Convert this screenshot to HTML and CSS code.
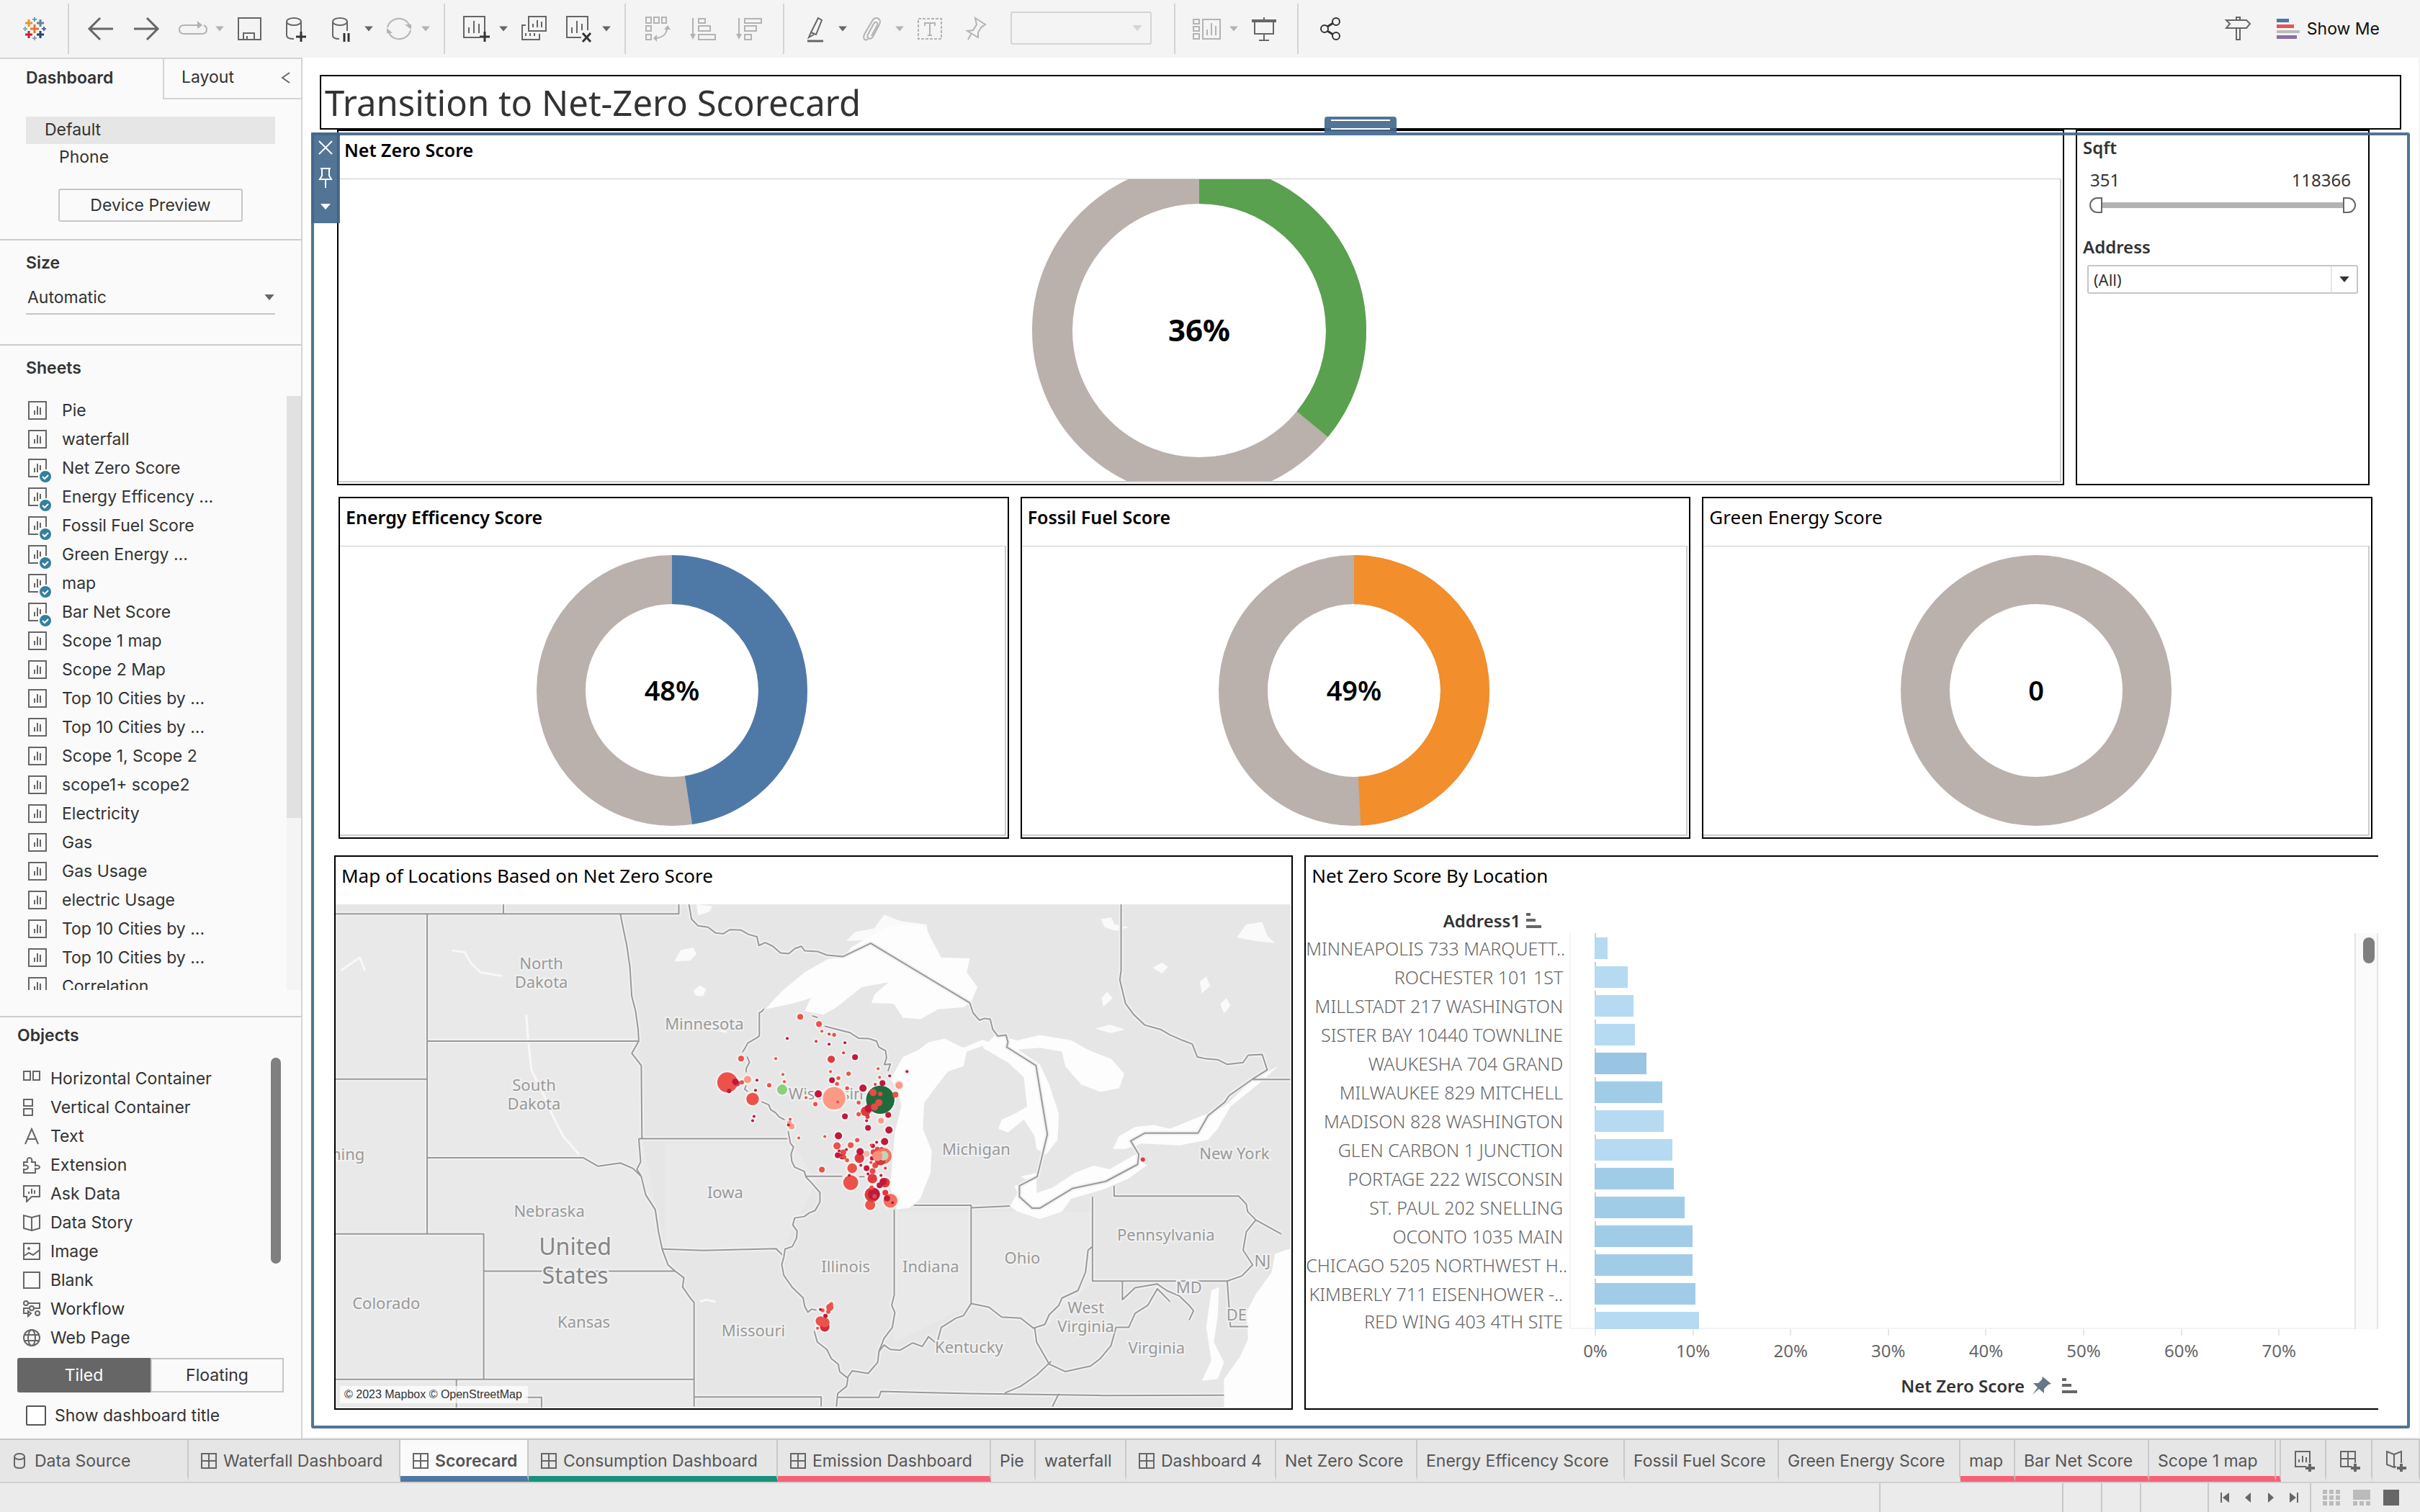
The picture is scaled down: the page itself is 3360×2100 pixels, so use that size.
FILE: index.html
```html
<!DOCTYPE html>
<html lang="en">
<head>
	<meta charset="UTF-8">
	<title>Transition to Net-Zero Scorecard</title>
	<link rel="stylesheet" href="styles.css">
</head>
<body>
	<!-- shared icons -->
	<svg class="defs" width="0" height="0">
		<symbol id="i-sheet" viewBox="0 0 26 26"><path d="M1 1h24v24H1zM9 19v-6M13 19V7M17 19V9" fill="none" stroke="#666" stroke-width="2"/></symbol>
		<symbol id="i-sheet-used" viewBox="0 0 34 34"><path d="M14 25H1V1h24v14M9 19v-6M13 19V7M17 16V9" fill="none" stroke="#666" stroke-width="2"/><circle cx="24" cy="25" r="8" fill="#357f9f"/><path d="M20 25l3 3 5-5" fill="none" stroke="#fff" stroke-width="2"/></symbol>
		<symbol id="i-grid" viewBox="0 0 24 24"><path d="M2 2h20v20H2zM12 2v20M2 12h20" fill="none" stroke="#666" stroke-width="2"/></symbol>
		<symbol id="i-caret" viewBox="0 0 12 12"><path d="M1 3h10L6 9z" fill="currentColor"/></symbol>
		<symbol id="i-sort" viewBox="0 0 22 22"><path d="M0 0h6v4H0zM0 8h13v4H0zM0 17h21v4H0z" fill="#666"/></symbol>
	</svg>

	<header class="toolbar">
		<button class="tool logo" aria-label="Tableau"><svg viewBox="0 0 40 40">
			<g fill="none" stroke-width="3"><path d="M20 14v12M14 20h12" stroke="#e8762c"/><path d="M12 7v10M7 12h10" stroke="#eb912c"/><path d="M28 7v10M23 12h10" stroke="#59879b"/><path d="M12 23v10M7 28h10" stroke="#c72035"/><path d="M28 23v10M23 28h10" stroke="#1f447e"/></g>
			<g fill="none" stroke-width="2"><path d="M20 4v6M17 7h6" stroke="#7099a6"/><path d="M20 30v6M17 33h6" stroke="#8aa0bd"/><path d="M7 17v6M4 20h6" stroke="#7ab0bd"/><path d="M33 17v6M30 20h6" stroke="#5b6591"/></g>
		</svg></button>
		<span class="sep"></span>
		<button class="tool" aria-label="Undo"><svg viewBox="0 0 40 40"><path d="M19 5L4 20l15 15M4 20h33" stroke-width="3"/></svg></button>
		<button class="tool" aria-label="Redo"><svg viewBox="0 0 40 40"><path d="M20 5l15 15-15 15M35 20H2" stroke-width="3"/></svg></button>
		<button class="tool off" aria-label="Replay"><svg viewBox="0 0 40 40"><path d="M27 15H8q-7 0-7 6t7 6h24q7 0 7-6 0-4-4-6"/><path d="M26 9l7 6-7 5z" class="solid"/></svg></button>
		<button class="caret off" aria-label="Replay options"><svg><use href="#i-caret"/></svg></button>
		<button class="tool" aria-label="Save"><svg viewBox="0 0 40 40"><path d="M4 5h31v30H4zM11 35V26h15v9M16 35v-5"/></svg></button>
		<button class="tool" aria-label="New data source"><svg viewBox="0 0 40 40"><ellipse cx="17" cy="10" rx="10" ry="5"/><path d="M7 10v19q0 5 10 5M27 10v15"/><path d="M27 24v14M20 31h14" class="dark"/></svg></button>
		<button class="tool" aria-label="Pause updates"><svg viewBox="0 0 40 40"><ellipse cx="17" cy="10" rx="10" ry="5"/><path d="M7 10v19q0 5 9 5M27 10v13"/><path d="M23 26v12M29 26v12" class="dark"/></svg></button>
		<button class="caret" aria-label="Update options"><svg><use href="#i-caret"/></svg></button>
		<button class="tool off" aria-label="Refresh"><svg viewBox="0 0 40 40"><path d="M4 18A16 15 0 0 1 34 14M36 22A16 15 0 0 1 6 26"/><path d="M28 14h9v7zM3 19v7h8z" class="solid"/></svg></button>
		<button class="caret off" aria-label="Refresh options"><svg><use href="#i-caret"/></svg></button>
		<span class="sep"></span>
		<button class="tool" aria-label="New worksheet"><svg viewBox="0 0 40 40"><path d="M24 32H2V3h29v21M9 26v-8M16 26V9M23 26V13"/><path d="M31 24v14M24 31h14" class="dark"/></svg></button>
		<button class="caret" aria-label="New worksheet options"><svg><use href="#i-caret"/></svg></button>
		<button class="tool" aria-label="Duplicate"><svg viewBox="0 0 40 40"><path d="M13 3h24v20H13zM19 18v-5M25 18V8M31 18v-8M9 15H4v20h24v-8M9 30v-4M15 30v-4M21 30v-4"/></svg></button>
		<button class="tool" aria-label="Clear sheet"><svg viewBox="0 0 40 40"><path d="M22 32H2V3h29v19M9 26v-8M16 26V9M23 22V13"/><path d="M24 26l11 12M35 26L24 38" class="dark"/></svg></button>
		<button class="caret" aria-label="Clear options"><svg><use href="#i-caret"/></svg></button>
		<span class="sep"></span>
		<button class="tool off" aria-label="Swap"><svg viewBox="0 0 40 40"><path d="M4 4h7v8H4zM15 4h7v8h-7zM26 4h6v8h-6zM4 16h7v7H4zM4 28h7v7H4zM18 33q14-2 15-13"/><path d="M29 21l5-6 4 6zM19 28l-5 5 5 5z" class="solid"/></svg></button>
		<button class="tool off" aria-label="Sort ascending"><svg viewBox="0 0 40 40"><path d="M5 5v26M13 6h9v6h-9zM13 16h16v7H13zM13 28h23v7H13z"/><path d="M1 27h8l-4 8z" class="solid"/></svg></button>
		<button class="tool off" aria-label="Sort descending"><svg viewBox="0 0 40 40"><path d="M5 5v26M13 6h23v6H13zM13 16h16v7H13zM13 28h9v7h-9z"/><path d="M1 27h8l-4 8z" class="solid"/></svg></button>
		<span class="sep"></span>
		<button class="tool" aria-label="Highlight"><svg viewBox="0 0 40 40"><path d="M23 5l5 3-8 20-7-3zM13 25l-3 7 7-4"/><path d="M8 37h22" stroke-width="3"/></svg></button>
		<button class="caret" aria-label="Highlight options"><svg><use href="#i-caret"/></svg></button>
		<button class="tool off" aria-label="Group"><svg viewBox="0 0 40 40"><path d="M18 30l8-15c2-4-3-6-5-2l-8 15c-2 4 3 9 7 3l9-17c4-8-6-13-10-5L9 26c-5 9 2 12 5 7"/></svg></button>
		<button class="caret off" aria-label="Group options"><svg><use href="#i-caret"/></svg></button>
		<button class="tool off" aria-label="Show mark labels"><svg viewBox="0 0 40 40"><path d="M4 6h32v28H4z" stroke-dasharray="4 2"/><path d="M13 16v-4h14v4M20 12v17M17 29h6"/></svg></button>
		<button class="tool off" aria-label="Fix axes"><svg viewBox="0 0 40 40"><path d="M19 5l14 9-4 3-1 0-5 8 0 7-15-9 8-1 5-8zM14 26L9 35"/></svg></button>
		<div class="fit-select"><select aria-label="Fit"><option></option></select><svg><use href="#i-caret"/></svg></div>
		<span class="sep"></span>
		<button class="tool off" aria-label="Show cards"><svg viewBox="0 0 40 40"><path d="M1 7h8v6H1zM1 17h8v6H1zM1 27h8v7H1zM14 7h24v27H14zM20 29v-8M26 29V12M32 29V16"/></svg></button>
		<button class="caret off" aria-label="Card options"><svg><use href="#i-caret"/></svg></button>
		<button class="tool" aria-label="Presentation mode"><svg viewBox="0 0 40 40"><path d="M7 10v17h26V10M20 27v9M13 36h14M20 4v3"/><path d="M3 9h34" stroke-width="4"/></svg></button>
		<span class="sep"></span>
		<button class="tool" aria-label="Share"><svg viewBox="0 0 40 40"><path d="M16 17l8-5M16 23l8 5" class="dark"/><g stroke="#333"><circle cx="12" cy="20" r="5"/><circle cx="28" cy="10" r="5"/><circle cx="28" cy="30" r="5"/></g></svg></button>
		<button class="tool guide" aria-label="Guide"><svg viewBox="0 0 40 40"><path d="M4 8h28l5 5-5 6H4l5-6zM18 19v16h5V19M18 8V4h5v4"/></svg></button>
		<button class="show-me"><svg width="32" height="32" viewBox="0 0 32 32"><path d="M0 2h17v5H0z" fill="#4a78a8"/><path d="M0 10h24v5H0z" fill="#e15759"/><path d="M0 18h32v4H0z" fill="#bbb"/><path d="M0 25h28v5H0z" fill="#8a6fa8"/></svg>Show Me</button>
	</header>

	<div class="workspace">
		<aside class="sidebar">
			<nav class="side-tabs">
				<button class="side-tab active">Dashboard</button>
				<button class="side-tab">Layout</button>
				<button class="collapse" aria-label="Collapse"><svg width="14" height="16" viewBox="0 0 14 16"><path d="M12 1L2 8l10 7" fill="none" stroke="#666" stroke-width="2"/></svg></button>
			</nav>
			<section class="devices">
				<ul>
					<li class="selected">Default</li>
					<li class="nested">Phone</li>
				</ul>
				<button class="preview">Device Preview</button>
			</section>
			<section class="size">
				<h2><label for="size">Size</label></h2>
				<div class="size-select">
					<select id="size"><option>Automatic</option></select>
					<svg><use href="#i-caret"/></svg>
				</div>
			</section>
			<section class="sheets">
				<h2>Sheets</h2>
				<div class="sheet-scroll">
					<ul>
						<li><svg class="sheet"><use href="#i-sheet"/></svg>Pie</li>
						<li><svg class="sheet"><use href="#i-sheet"/></svg>waterfall</li>
						<li><svg class="used"><use href="#i-sheet-used"/></svg>Net Zero Score</li>
						<li><svg class="used"><use href="#i-sheet-used"/></svg>Energy Efficency ...</li>
						<li><svg class="used"><use href="#i-sheet-used"/></svg>Fossil Fuel Score</li>
						<li><svg class="used"><use href="#i-sheet-used"/></svg>Green Energy ...</li>
						<li><svg class="used"><use href="#i-sheet-used"/></svg>map</li>
						<li><svg class="used"><use href="#i-sheet-used"/></svg>Bar Net Score</li>
						<li><svg class="sheet"><use href="#i-sheet"/></svg>Scope 1 map</li>
						<li><svg class="sheet"><use href="#i-sheet"/></svg>Scope 2 Map</li>
						<li><svg class="sheet"><use href="#i-sheet"/></svg>Top 10 Cities by ...</li>
						<li><svg class="sheet"><use href="#i-sheet"/></svg>Top 10 Cities by ...</li>
						<li><svg class="sheet"><use href="#i-sheet"/></svg>Scope 1, Scope 2</li>
						<li><svg class="sheet"><use href="#i-sheet"/></svg>scope1+ scope2</li>
						<li><svg class="sheet"><use href="#i-sheet"/></svg>Electricity</li>
						<li><svg class="sheet"><use href="#i-sheet"/></svg>Gas</li>
						<li><svg class="sheet"><use href="#i-sheet"/></svg>Gas Usage</li>
						<li><svg class="sheet"><use href="#i-sheet"/></svg>electric Usage</li>
						<li><svg class="sheet"><use href="#i-sheet"/></svg>Top 10 Cities by ...</li>
						<li><svg class="sheet"><use href="#i-sheet"/></svg>Top 10 Cities by ...</li>
						<li><svg class="sheet"><use href="#i-sheet"/></svg>Correlation</li>
					</ul>
					<div class="track"><div class="thumb"></div></div>
				</div>
			</section>
			<section class="objects">
				<h2>Objects</h2>
				<div class="object-scroll">
					<ul>
						<li><svg viewBox="0 0 24 24"><path d="M1 2h9v12H1zM14 2h9v12h-9z"/></svg>Horizontal Container</li>
						<li><svg viewBox="0 0 24 24"><path d="M1 1h12v9H1zM1 14h12v9H1z"/></svg>Vertical Container</li>
						<li><svg viewBox="0 0 24 24"><path d="M3 23l9-21 9 21M6 16h12"/></svg>Text</li>
						<li><svg viewBox="0 0 24 24"><path d="M1 8h5c-1-3 0-6 3-6s4 3 3 6h5v5c3-1 6 0 6 2s-3 3-6 2v6H1v-5c4 1 6-1 6-3s-3-3-6-2z"/></svg>Extension</li>
						<li><svg viewBox="0 0 24 24"><path d="M1 1h22v15H12l-7 7v-7H1zM8 12V9M12 12V5M16 12V7"/></svg>Ask Data</li>
						<li><svg viewBox="0 0 24 24"><path d="M12 5L1 2v18l11 3 11-3V2zM12 5v18"/></svg>Data Story</li>
						<li><svg viewBox="0 0 24 24"><path d="M1 1h22v22H1zM2 18l6-4 6 3 9-7"/><circle cx="8" cy="8" r="1"/></svg>Image</li>
						<li><svg viewBox="0 0 24 24"><path d="M1 1h22v22H1z"/></svg>Blank</li>
						<li><svg viewBox="0 0 24 24"><circle cx="4" cy="4" r="3"/><path d="M7 4h16v7h-7M8 11H1v7h5"/><circle cx="12" cy="11" r="3"/><circle cx="20" cy="18" r="3"/><path d="M7 15l4 3-4 4z"/></svg>Workflow</li>
						<li><svg viewBox="0 0 24 24"><circle cx="12" cy="12" r="11"/><ellipse cx="12" cy="12" rx="5" ry="11"/><path d="M2 8h20M2 16h20"/></svg>Web Page</li>
					</ul>
					<div class="object-thumb"></div>
				</div>
				<div class="toggle">
					<button class="on">Tiled</button>
					<button>Floating</button>
				</div>
				<label class="show-title"><input type="checkbox">Show dashboard title</label>
			</section>
		</aside>

		<main class="dashboard">
			<h1>Transition to Net-Zero Scorecard</h1>
			<div class="row row-top">
				<section class="panel">
					<h3>Net Zero Score</h3>
					<div class="donut">
						<svg width="464" height="464" viewBox="0 0 464 464">
							<circle cx="232" cy="232" r="204" fill="none" stroke="#bab0ac" stroke-width="56"/>
							<circle cx="232" cy="232" r="204" fill="none" stroke="#59a14f" stroke-width="56" pathLength="100" stroke-dasharray="36 100" transform="rotate(-90 232 232)"/>
							<text x="232" y="247" class="big">36%</text>
						</svg>
					</div>
				</section>
				<section class="panel filters">
					<h4>Sqft</h4>
					<div class="range-values"><span>351</span><span>118366</span></div>
					<div class="range">
						<input type="range" class="low" min="351" max="118366" value="351" aria-label="Sqft minimum">
						<input type="range" class="high" min="351" max="118366" value="118366" aria-label="Sqft maximum">
					</div>
					<h4><label for="address">Address</label></h4>
					<div class="address-select">
						<select id="address"><option>(All)</option></select>
						<span><svg><use href="#i-caret"/></svg></span>
					</div>
				</section>
			</div>
			<div class="row row-scores">
				<section class="panel">
					<h3>Energy Efficency Score</h3>
					<div class="donut">
						<svg width="376" height="376" viewBox="0 0 376 376">
							<circle cx="188" cy="188" r="154" fill="none" stroke="#bab0ac" stroke-width="68"/>
							<circle cx="188" cy="188" r="154" fill="none" stroke="#4e79a7" stroke-width="68" pathLength="100" stroke-dasharray="47.6 100" transform="rotate(-90 188 188)"/>
							<text x="188" y="202">48%</text>
						</svg>
					</div>
				</section>
				<section class="panel">
					<h3>Fossil Fuel Score</h3>
					<div class="donut">
						<svg width="376" height="376" viewBox="0 0 376 376">
							<circle cx="188" cy="188" r="154" fill="none" stroke="#bab0ac" stroke-width="68"/>
							<circle cx="188" cy="188" r="154" fill="none" stroke="#f28e2b" stroke-width="68" pathLength="100" stroke-dasharray="49.2 100" transform="rotate(-90 188 188)"/>
							<text x="188" y="202">49%</text>
						</svg>
					</div>
				</section>
				<section class="panel">
					<h3 class="plain">Green Energy Score</h3>
					<div class="donut">
						<svg width="376" height="376" viewBox="0 0 376 376">
							<circle cx="188" cy="188" r="154" fill="none" stroke="#bab0ac" stroke-width="68"/>
							<text x="188" y="202">0</text>
						</svg>
					</div>
				</section>
			</div>
			<div class="row row-bottom">
				<section class="panel map-panel">
					<h3 class="plain">Map of Locations Based on Net Zero Score</h3>
					<div class="map">
						<svg viewBox="0 0 1326 698" preserveAspectRatio="xMidYMid slice">
							<!-- base map -->
							<svg width="1326" height="698" viewBox="41 150 1505 1368" preserveAspectRatio="none">
								<rect x="41" y="150" width="1505" height="1368" fill="#e6e6e6"/>
								<path d="M41 176H490L510 400 519 522 524 787 560 1088 606 1232V1518H41zM560 800H760L800 900 770 1000 745 1090 560 1085zM925 985H1230V1180L1160 1300 1040 1240 920 1340z" fill="#e9e9e9"/>
								<g fill="#fafafa">
									<path d="M575 305L585 275 605 267 610 285 600 303zM605 385L615 370 625 380 620 400 608 398zM643 495L655 490 658 500zM1246 190L1262 185 1268 205 1290 212 1270 222 1252 212zM1460 240L1475 205 1500 198 1508 235 1520 255 1490 250zM1328 322L1342 308 1352 320 1342 338zM1402 360L1412 346 1418 372 1405 392zM1434 420L1444 405 1450 425 1440 447zM1247 405L1256 388 1265 405 1250 428zM1237 488L1260 477 1284 490 1262 500zM610 150L635 155 630 170 612 180zM845 250L860 225 890 215 905 178 930 195 972 205 975 240z"/>
								</g>
								<g fill="#fdfdfd">
									<path d="M718 435L745 385 780 335 815 300 840 293 855 265 885 235 905 215 935 205 970 210 978 240 995 295 1040 297 1035 335 1052 375 1042 415 1030 430 990 435 962 462 935 458 920 420 885 418 890 395 912 362 870 375 830 430 810 450 780 440 790 405 760 420z"/>
									<path d="M925 980L945 975 962 950 978 880 980 820 966 760 968 690 985 650 1005 605 1030 590 1035 550 1060 535 1100 545 1060 518 1030 540 1000 515 975 525 960 545 935 565 915 625 928 660 932 700 922 770 918 850 915 920z"/>
									<path d="M1080 505L1115 520 1150 505 1200 520 1225 545 1262 570 1283 610 1275 650 1245 660 1215 640 1190 590 1185 550 1150 540 1115 545 1150 585 1165 640 1180 720 1178 790 1160 830 1145 815 1142 780 1125 735 1100 770 1085 760 1090 735 1110 720 1130 700 1125 620 1100 580 1060 540z"/>
									<path d="M1103 970L1115 935 1110 915 1135 905 1120 890 1145 880 1145 935 1170 920 1205 880 1235 860 1260 870 1300 830 1318 860 1290 895 1250 925 1200 950 1185 985 1150 1005 1115 985z"/>
									<path d="M1265 815L1275 780 1300 755 1330 750 1355 760 1390 735 1420 715 1440 700 1484 630 1525 590 1500 630 1450 700 1430 760 1415 790 1370 805 1310 800 1285 815z"/>
									<path d="M1546 1085L1520 1100 1515 1150 1490 1210 1475 1260 1478 1330 1465 1380 1440 1440 1440 1518 1546 1518z"/>
									<path d="M1420 1200L1432 1190 1430 1270 1424 1340 1440 1395 1430 1440 1405 1445 1420 1390 1412 1300z"/>
								</g>
								<path class="river" d="M225 275L245 280 255 310 270 335 305 345M342 450L345 520 350 600 370 670 385 730 400 780 425 830M50 330L80 295 88 330M615 1230L625 1225 640 1230"/>
								<defs>
									<g id="borders">
										<path d="M41 176H582V150M306 150V176M598 150L602 190 612 208 628 212 640 228 652 230 662 219 680 220 692 232 705 238 708 262 718 254 730 264 742 282 755 284 765 270 775 264 780 276 800 278 815 288 840 292 884 256 1040 418 1045 445 1055 465 1063 460 1072 462 1076 490 1084 508 1097 505 1100 525 1098 538 1144 588 1162 775 1146 890 1118 915 1118 945 1138 976H1150L1202 922 1254 903 1304 857 1306 830 1293 793 1315 772H1399L1415 724 1441 688 1448 670 1484 626H1544"/>
										<path d="M1278 150V330L1276 355 1285 420 1298 450 1315 478 1340 490 1355 505 1375 520 1390 530 1398 565 1412 570 1430 572 1445 585 1470 580 1478 560 1500 558 1508 600 1484 626"/>
										<path d="M186 176V1046M41 625H186M186 522H519M186 839H432L455 862 490 853 510 868 523 890"/>
										<path d="M490 176L495 220 500 260 505 320 508 400 514 440 518 490 519 522 508 555 523 588 524 787M519 787H757M519 787L522 850 516 870 523 890 530 940 545 980 550 1040 556 1088 565 1130 577 1148 590 1165 588 1190 600 1220 606 1232V1515"/>
										<path d="M556 1087L620 1091 735 1086 748 1108M275 1147H577M41 1046H275V1442M41 1441H606M232 1442V1518M340 1490H366V1518M606 1489H806V1515"/>
										<path d="M952 968H1042V1235M1042 975L1103 970M921 980V1212L917 1240 922 1260 918 1300 905 1330 897 1365"/>
										<path d="M795 1310L800 1340 815 1360 822 1385 833 1400 835 1420 848 1438 846 1460 832 1480 830 1515M848 1435L855 1418 880 1425 895 1395 897 1365 905 1348 915 1360 930 1362 950 1342 965 1352 975 1325 988 1345 995 1300 1018 1275 1030 1268 1042 1235 1070 1245 1090 1272 1120 1275 1140 1302 1158 1292 1165 1265 1180 1240 1185 1220 1210 1200 1222 1150 1226 1090 1233 1080"/>
										<path d="M1233 945V1174H1445M1267 915V943H1463L1475 965 1477 985 1490 1008 1530 1046M1490 1008L1475 1040 1470 1090 1485 1130 1468 1160 1445 1174 1450 1298H1478M1280 1174V1225L1300 1192 1335 1182 1350 1200 1370 1215 1385 1240 1392 1255 1385 1280"/>
										<path d="M1355 1230L1335 1195 1320 1240 1300 1262 1290 1300 1270 1300 1262 1350 1245 1385 1230 1405 1190 1420 1165 1400 1145 1340 1142 1300M1168 1392L1145 1430 1120 1460 1095 1478M832 1490H897L900 1474 1040 1480 1250 1485 1440 1484M1180 1480L1170 1515"/>
									</g>
								</defs>
								<use href="#borders" class="border-halo"/>
								<use href="#borders" class="border-line"/>
							</svg>
							<!-- Wisconsin and Illinois, with the marks -->
							<svg x="494" y="123" width="400" height="480" viewBox="0 0 1200 1440">
								<defs>
									<path id="rivers" d="M302 66L294 76 283 82V178L270 188 235 208 222 232 213 246M232 265L242 288 228 315V330M228 385L222 400 235 410M292 452L322 465 330 485 350 498 365 515 388 528M403 575L412 625 425 640 415 670 418 700 430 725 470 742 477 766 500 790 535 830V870L515 905 490 915 470 930 430 936 422 965 440 990 438 1020 420 1055 390 1065 385 1098 376 1130 385 1175 420 1225 465 1268 472 1305 485 1328 500 1315 520 1320M477 763H628M698 764H720M503 95L525 102M555 138L660 165 695 188 740 190 770 200 780 225 808 240 812 270 803 298 828 295 818 325"/>
								</defs>
								<use href="#rivers" class="border-halo"/>
								<use href="#rivers" class="border-line"/>
								<text x="404" y="443" class="place wi">Wisconsin</text>
								<use href="#marks" class="halo"/>
								<g id="marks">
									<g fill="#216a3c"><circle cx="786" cy="444" r="59"/></g>
									<g fill="#8bce7c"><circle cx="378" cy="402" r="21"/></g>
									<g fill="#fd9a85"><circle cx="594" cy="438" r="47"/><circle cx="234" cy="360" r="15"/><circle cx="864" cy="384" r="15"/><circle cx="789" cy="531" r="12"/><circle cx="408" cy="540" r="9"/><circle cx="417" cy="555" r="12"/></g>
									<g fill="#ec5249">
										<circle cx="150" cy="372" r="42"/><circle cx="255" cy="441" r="26"/><circle cx="453" cy="99" r="12"/><circle cx="531" cy="129" r="12"/><circle cx="543" cy="159" r="6"/><circle cx="594" cy="174" r="8"/><circle cx="207" cy="273" r="12"/><circle cx="351" cy="273" r="6"/><circle cx="579" cy="327" r="6"/><circle cx="612" cy="354" r="8"/><circle cx="654" cy="336" r="9"/><circle cx="606" cy="378" r="8"/><circle cx="648" cy="396" r="8"/><circle cx="381" cy="339" r="6"/><circle cx="387" cy="369" r="6"/><circle cx="324" cy="384" r="9"/><circle cx="210" cy="372" r="9"/><circle cx="477" cy="435" r="6"/><circle cx="516" cy="462" r="9"/><circle cx="609" cy="453" r="6"/><circle cx="696" cy="456" r="8"/><circle cx="696" cy="504" r="9"/><circle cx="777" cy="315" r="6"/><circle cx="783" cy="351" r="6"/><circle cx="411" cy="525" r="6"/><circle cx="447" cy="603" r="6"/><circle cx="555" cy="597" r="6"/><circle cx="606" cy="636" r="15"/><circle cx="690" cy="612" r="9"/><circle cx="663" cy="633" r="12"/><circle cx="543" cy="735" r="12"/><circle cx="669" cy="729" r="20"/><circle cx="663" cy="789" r="31"/><circle cx="648" cy="696" r="8"/><circle cx="744" cy="882" r="21"/><circle cx="849" cy="423" r="12"/>
									</g>
									<g fill="#e03a40"><circle cx="582" cy="276" r="15"/><circle cx="725" cy="492" r="20"/><circle cx="733" cy="515" r="9"/><circle cx="699" cy="687" r="20"/><circle cx="753" cy="772" r="20"/><circle cx="806" cy="789" r="20"/><circle cx="752" cy="839" r="31"/><circle cx="807" cy="831" r="12"/><circle cx="519" cy="201" r="6"/><circle cx="573" cy="171" r="6"/><circle cx="633" cy="249" r="6"/><circle cx="765" cy="380" r="6"/><circle cx="807" cy="729" r="6"/><circle cx="190" cy="376" r="12"/></g>
									<g fill="#bf1a3c">
										<circle cx="183" cy="369" r="13"/><circle cx="157" cy="408" r="9"/><circle cx="273" cy="363" r="6"/><circle cx="267" cy="405" r="6"/><circle cx="261" cy="513" r="6"/><circle cx="255" cy="531" r="6"/><circle cx="399" cy="189" r="6"/><circle cx="573" cy="213" r="6"/><circle cx="639" cy="207" r="6"/><circle cx="681" cy="267" r="12"/><circle cx="585" cy="363" r="12"/><circle cx="528" cy="420" r="15"/><circle cx="714" cy="396" r="15"/><circle cx="795" cy="375" r="12"/><circle cx="825" cy="345" r="6"/><circle cx="897" cy="327" r="6"/><circle cx="639" cy="513" r="12"/><circle cx="738" cy="480" r="17"/><circle cx="819" cy="507" r="12"/><circle cx="822" cy="570" r="15"/><circle cx="735" cy="561" r="12"/><circle cx="729" cy="531" r="6"/><circle cx="612" cy="594" r="15"/><circle cx="804" cy="618" r="15"/><circle cx="771" cy="621" r="6"/><circle cx="755" cy="636" r="9"/><circle cx="702" cy="660" r="15"/><circle cx="645" cy="651" r="6"/><circle cx="609" cy="675" r="12"/><circle cx="628" cy="680" r="12"/><circle cx="615" cy="657" r="6"/><circle cx="705" cy="717" r="6"/><circle cx="729" cy="729" r="12"/><circle cx="735" cy="753" r="6"/><circle cx="789" cy="759" r="6"/><circle cx="657" cy="759" r="6"/><circle cx="798" cy="785" r="15"/><circle cx="783" cy="800" r="12"/><circle cx="760" cy="837" r="25"/><circle cx="404" cy="549" r="6"/><circle cx="792" cy="650" r="9"/>
									</g>
									<g fill="#e84a45"><circle cx="756" cy="414" r="15"/><circle cx="780" cy="456" r="15"/><circle cx="762" cy="474" r="15"/><circle cx="786" cy="420" r="9"/><circle cx="748" cy="633" r="6"/><circle cx="774" cy="650" r="10"/><circle cx="758" cy="662" r="12"/><circle cx="632" cy="663" r="12"/><circle cx="636" cy="683" r="9"/><circle cx="622" cy="682" r="5"/><circle cx="754" cy="741" r="12"/><circle cx="765" cy="717" r="12"/><circle cx="747" cy="705" r="6"/><circle cx="750" cy="810" r="9"/><circle cx="762" cy="846" r="9"/></g>
									<g fill="#f6705e"><circle cx="799" cy="678" r="34"/><circle cx="828" cy="864" r="29"/></g>
									<g fill="#dd3540"><circle cx="786" cy="694" r="23"/></g>
									<g fill="#bf1a3c"><circle cx="752" cy="688" r="9"/><circle cx="814" cy="854" r="13"/><circle cx="837" cy="873" r="6"/></g>
									<g fill="#bcd7b5"><circle cx="800" cy="677" r="20"/></g>
									<g fill="#fc907c"><circle cx="774" cy="678" r="21"/></g>
									<g fill="#f0b9a8"><circle cx="729" cy="669" r="13"/></g>
									<g fill="#d32a40"><circle cx="555" cy="1389" r="20"/></g>
									<g fill="#ec5249"><circle cx="537" cy="1365" r="20"/><circle cx="555" cy="1371" r="20"/><circle cx="576" cy="1308" r="15"/><circle cx="582" cy="1294" r="8"/><circle cx="570" cy="1326" r="9"/><circle cx="546" cy="1320" r="8"/><circle cx="525" cy="1395" r="6"/></g>
									<g fill="#bf1a3c"><circle cx="537" cy="1317" r="6"/><circle cx="558" cy="1344" r="9"/></g>
								</g>
							</svg>
							<circle cx="1120" cy="354" r="3" fill="#e03a40"/>
							<g class="place">
								<text x="286" y="90">North</text><text x="286" y="116">Dakota</text>
								<text x="512" y="174">Minnesota</text>
								<text x="276" y="259">South</text><text x="276" y="285">Dakota</text>
								<text x="-8" y="354">Wyoming</text>
								<text x="889" y="348">Michigan</text>
								<text x="1247" y="353">New York</text>
								<text x="541" y="407">Iowa</text>
								<text x="297" y="433">Nebraska</text>
								<text x="71" y="561">Colorado</text>
								<text x="345" y="587">Kansas</text>
								<text x="580" y="599">Missouri</text>
								<text x="708" y="510">Illinois</text>
								<text x="826" y="510">Indiana</text>
								<text x="953" y="498">Ohio</text>
								<text x="1152" y="466">Pennsylvania</text>
								<text x="1286" y="502">NJ</text>
								<text x="1184" y="539">MD</text>
								<text x="1250" y="577">DE</text>
								<text x="1041" y="567">West</text><text x="1041" y="593">Virginia</text>
								<text x="879" y="622">Kentucky</text>
								<text x="1139" y="623">Virginia</text>
								<g class="country"><text x="333" y="486">United</text><text x="333" y="526">States</text></g>
							</g>
						</svg>
						<p class="credit">© 2023 Mapbox © OpenStreetMap</p>
					</div>
				</section>
				<section class="panel bar-panel">
					<h3 class="plain">Net Zero Score By Location</h3>
					<div class="bars">
						<div class="bars-head">Address1<svg width="22" height="22"><use href="#i-sort"/></svg></div>
						<div class="bars-body">
							<ul class="names">
								<li>MINNEAPOLIS 733 MARQUETT..</li>
								<li>ROCHESTER 101 1ST</li>
								<li>MILLSTADT 217 WASHINGTON</li>
								<li>SISTER BAY 10440 TOWNLINE</li>
								<li>WAUKESHA 704 GRAND</li>
								<li>MILWAUKEE 829 MITCHELL</li>
								<li>MADISON 828 WASHINGTON</li>
								<li>GLEN CARBON 1 JUNCTION</li>
								<li>PORTAGE 222 WISCONSIN</li>
								<li>ST. PAUL 202 SNELLING</li>
								<li>OCONTO 1035 MAIN</li>
								<li>CHICAGO 5205 NORTHWEST H..</li>
								<li>KIMBERLY 711 EISENHOWER -..</li>
								<li>RED WING 403 4TH SITE</li>
							</ul>
							<ul class="plot">
								<li><i class="bar c1" style="width: 1.7%"></i></li>
								<li><i class="bar c1" style="width: 4.3%"></i></li>
								<li><i class="bar c1" style="width: 5.1%"></i></li>
								<li><i class="bar c1" style="width: 5.3%"></i></li>
								<li><i class="bar c3" style="width: 6.8%"></i></li>
								<li><i class="bar c2" style="width: 8.9%"></i></li>
								<li><i class="bar c1" style="width: 9.1%"></i></li>
								<li><i class="bar c1" style="width: 10.2%"></i></li>
								<li><i class="bar c2" style="width: 10.4%"></i></li>
								<li><i class="bar c2" style="width: 11.8%"></i></li>
								<li><i class="bar c2" style="width: 12.9%"></i></li>
								<li><i class="bar c2" style="width: 12.9%"></i></li>
								<li><i class="bar c2" style="width: 13.3%"></i></li>
								<li><i class="bar c1" style="width: 13.7%"></i></li>
							</ul>
							<div class="bar-track"><div></div></div>
						</div>
						<div class="axis">
							<span>0%</span><span>10%</span><span>20%</span><span>30%</span><span>40%</span><span>50%</span><span>60%</span><span>70%</span>
						</div>
						<div class="axis-title"><span></span><b>Net Zero Score</b><span><svg width="28" height="26" viewBox="0 0 28 26"><path d="M15 0l12 10-4 1-6 6v6l-7-6-9 8 7-10-6-6h7l5-5z" fill="#667788"/></svg><svg width="22" height="22"><use href="#i-sort"/></svg></span></div>
					</div>
				</section>
			</div>

			<div class="selection">
				<div class="grip"></div>
				<div class="handle">
					<button aria-label="Remove"><svg width="22" height="22" viewBox="0 0 22 22"><path d="M2 2l18 18M20 2L2 20"/></svg></button>
					<button aria-label="Pin"><svg width="20" height="30" viewBox="0 0 20 30"><path d="M3 2h14M5 2v10l-3 5h16l-3-5V2M10 17v12"/></svg></button>
					<button aria-label="More options"><svg width="18" height="18" viewBox="0 0 18 18"><path d="M2 5h14l-7 8z" class="solid"/></svg></button>
				</div>
			</div>
		</main>
	</div>

	<nav class="tabs">
		<a href="#" class="source"><svg width="20" height="24" viewBox="0 0 20 24"><ellipse cx="9" cy="6" rx="7" ry="4"/><path d="M2 6v12q0 4 7 4t7-4V6"/></svg>Data Source</a>
		<a href="#"><svg width="24" height="24"><use href="#i-grid"/></svg>Waterfall Dashboard</a>
		<a href="#" class="current"><svg width="24" height="24"><use href="#i-grid"/></svg>Scorecard</a>
		<a href="#" class="green"><svg width="24" height="24"><use href="#i-grid"/></svg>Consumption Dashboard</a>
		<a href="#" class="red"><svg width="24" height="24"><use href="#i-grid"/></svg>Emission Dashboard</a>
		<a href="#">Pie</a>
		<a href="#">waterfall</a>
		<a href="#"><svg width="24" height="24"><use href="#i-grid"/></svg>Dashboard 4</a>
		<a href="#">Net Zero Score</a>
		<a href="#">Energy Efficency Score</a>
		<a href="#">Fossil Fuel Score</a>
		<a href="#">Green Energy Score</a>
		<a href="#" class="red">map</a>
		<a href="#" class="red">Bar Net Score</a>
		<a href="#" class="red">Scope 1 map</a>
		<span class="red"></span>
		<button aria-label="New worksheet"><svg width="30" height="30" viewBox="0 0 30 30"><path d="M17 23H2V2h20v16M7 17v-4M12 17V8M17 17v-7"/><path d="M22 19v11M16 25h13" class="plus"/></svg></button>
		<button aria-label="New dashboard"><svg width="30" height="30" viewBox="0 0 30 30"><path d="M17 23H2V2h20v16M12 2v21M2 12h20"/><path d="M22 19v11M16 25h13" class="plus"/></svg></button>
		<button aria-label="New story"><svg width="30" height="30" viewBox="0 0 30 30"><path d="M12 6L2 2v18l10 4V6l10-4v16M12 24l3-1"/><path d="M22 19v11M16 25h13" class="plus"/></svg></button>
	</nav>

	<footer class="status">
		<span class="cell w1"></span><span class="cell w2"></span><span class="cell w2"></span><span class="cell w3"></span>
		<div class="pager">
			<button aria-label="First"><svg viewBox="0 0 16 16"><path d="M2 1h2v14H2zM14 1v14L5 8z"/></svg></button>
			<button aria-label="Previous"><svg viewBox="0 0 16 16"><path d="M12 1v14L4 8z"/></svg></button>
			<button aria-label="Next"><svg viewBox="0 0 16 16"><path d="M4 1v14l8-7z"/></svg></button>
			<button aria-label="Last"><svg viewBox="0 0 16 16"><path d="M12 1h2v14h-2zM2 1v14l9-7z"/></svg></button>
		</div>
		<div class="views">
			<button aria-label="Sheet sorter"><svg viewBox="0 0 24 24"><path fill="#bbb" d="M0 1h6v6H0zM9 1h6v6H9zM18 1h6v6h-6zM0 9h6v6H0zM9 9h6v6H9zM18 9h6v6h-6zM0 17h6v6H0zM9 17h6v6H9zM18 17h6v6h-6z"/></svg></button>
			<button aria-label="Filmstrip"><svg viewBox="0 0 24 24"><path fill="#bbb" d="M0 1h24v14H0zM0 17h6v6H0zM9 17h6v6H9zM18 17h6v6h-6z"/></svg></button>
			<button aria-label="Tabs"><svg viewBox="0 0 24 24"><path fill="#666" d="M0 1h22v22H0z"/></svg></button>
		</div>
	</footer>
</body>
</html>
```

FILE: styles.css
```css
* {
	box-sizing: border-box;
}
html, body {
	margin: 0;
	padding: 0;
	height: 100%;
}
body {
	display: flex;
	flex-direction: column;
	font-family: Inter, sans-serif;
	font-size: 23px;
	line-height: 32px;
	color: #333;
	background: #f4f4f4;
}
h1, h2, h3, h4, p, ul {
	margin: 0;
	padding: 0;
	list-style: none;
}
button, select, input {
	font: inherit;
	color: inherit;
	margin: 0;
}
button {
	padding: 0;
	border: 0;
	background: none;
}
select {
	appearance: none;
	border: 0;
	background: none;
	width: 100%;
}
svg {
	display: block;
	flex-shrink: 0;
}
.defs {
	position: absolute;
}

/* ----- TOOLBAR ----- */
.toolbar {
	display: flex;
	align-items: center;
	height: 80px;
	flex-shrink: 0;
	padding: 0 56px 0 28px;
	background: #f4f4f4;
}
.tool {
	width: 40px;
	height: 40px;
	margin-left: 24px;
}
.tool svg {
	width: 40px;
	height: 40px;
	fill: none;
	stroke: #666;
	stroke-width: 2;
}
.tool .dark {
	stroke: #333;
	stroke-width: 3;
}
.tool .solid {
	fill: #666;
	stroke: none;
}
.tool.off svg {
	stroke: #b3b3b3;
}
.tool.off .solid {
	fill: #b3b3b3;
}
.tool.logo {
	margin-left: 0;
}
.caret {
	width: 14px;
	margin-left: 10px;
	color: #666;
}
.caret svg {
	width: 14px;
	height: 14px;
}
.caret.off {
	color: #b3b3b3;
}
.caret + .tool {
	margin-left: 15px;
}
.sep {
	width: 2px;
	height: 70px;
	margin-left: 26px;
	background: #d4d4d4;
}
.caret + .sep {
	margin-left: 18px;
}
.fit-select {
	display: flex;
	align-items: center;
	width: 196px;
	height: 46px;
	margin: 0 5px 2px 28px;
	padding-right: 10px;
	border: 2px solid #d4d4d4;
	border-radius: 3px;
	color: #d4d4d4;
}
.fit-select svg {
	width: 16px;
	height: 16px;
}
.tool.guide {
	margin-left: auto;
}
.show-me {
	display: flex;
	align-items: center;
	gap: 10px;
	margin-left: 34px;
	color: #111;
}

/* ----- SIDEBAR ----- */
.workspace {
	display: flex;
	flex: 1;
	min-height: 0;
}
.sidebar {
	display: flex;
	flex-direction: column;
	width: 420px;
	flex-shrink: 0;
	border-top: 2px solid #d4d4d4;
	border-right: 2px solid #d4d4d4;
	background: #fafafa;
}
.sidebar h2 {
	font-size: 23px;
	font-weight: 600;
	line-height: 32px;
}
.side-tabs {
	display: flex;
	height: 56px;
}
.side-tab {
	width: 226px;
	padding: 0 0 4px 36px;
	text-align: left;
}
.side-tab.active {
	font-weight: 600;
}
.side-tab + .side-tab {
	flex: 1;
	padding-left: 24px;
	border-left: 2px solid #d4d4d4;
	border-bottom: 2px solid #d4d4d4;
}
.collapse {
	padding: 0 14px 2px 0;
	border-bottom: 2px solid #d4d4d4;
}
.devices {
	padding: 24px 36px 24px;
	border-bottom: 2px solid #ccc;
}
.devices li {
	padding: 2px 26px;
	height: 38px;
}
.devices li.selected {
	background: #e6e6e6;
}
.devices li.nested {
	padding-left: 46px;
}
.preview {
	display: block;
	width: 256px;
	height: 46px;
	margin: 24px auto 0;
	border: 2px solid #c6c6c6;
	border-radius: 3px;
}
.size {
	height: 146px;
	padding: 15px 36px 0;
	border-bottom: 2px solid #ccc;
}
.size-select {
	display: flex;
	align-items: center;
	height: 56px;
	padding-top: 10px;
	border-bottom: 2px solid #c6c6c6;
	color: #666;
}
.size-select select {
	padding-left: 2px;
	color: #333;
}
.size-select svg {
	width: 16px;
	height: 16px;
}
.sheets {
	display: flex;
	flex-direction: column;
	flex: 1;
	min-height: 0;
	padding: 15px 0 36px;
	border-bottom: 2px solid #ccc;
}
.sheets h2 {
	padding: 0 36px 23px;
}
.sheet-scroll {
	display: flex;
	flex: 1;
	min-height: 0;
	overflow: hidden;
}
.sheet-scroll ul {
	flex: 1;
}
.sheet-scroll li {
	display: flex;
	align-items: center;
	height: 40px;
	padding-left: 39px;
	white-space: nowrap;
}
.sheet {
	width: 26px;
	height: 26px;
	margin-right: 21px;
}
.used {
	width: 34px;
	height: 34px;
	margin: 8px 13px 0 0;
}
.track {
	width: 20px;
	background: #f4f4f4;
}
.thumb {
	height: 71%;
	background: #e1e1e1;
}
.objects {
	padding: 9px 24px 0;
	height: 585px;
}
.object-scroll {
	display: flex;
	justify-content: space-between;
	padding: 15px 4px 0 0;
}
.object-scroll ul {
	padding: 9px 0 8px;
}
.object-scroll li {
	display: flex;
	align-items: center;
	height: 40px;
	gap: 14px;
	padding-left: 8px;
}
.object-scroll li svg {
	width: 24px;
	height: 24px;
	fill: none;
	stroke: #666;
	stroke-width: 2;
}
.object-thumb {
	width: 14px;
	height: 286px;
	border-radius: 7px;
	background: #7f7f7f;
}
.toggle {
	display: flex;
	height: 48px;
}
.toggle button {
	flex: 1;
	border: 2px solid #c6c6c6;
}
.toggle .on {
	border-color: #666;
	border-radius: 3px 0 0 3px;
	background: #666;
	color: #fff;
}
.show-title {
	display: flex;
	align-items: center;
	gap: 12px;
	margin-top: 16px;
	padding-left: 12px;
}
.show-title input {
	appearance: none;
	width: 28px;
	height: 28px;
	border: 2px solid #555;
	border-radius: 2px;
	background: #fff;
}

/* ----- DASHBOARD ----- */
.dashboard {
	position: relative;
	display: flex;
	flex-direction: column;
	flex: 1;
	min-width: 0;
	padding: 24px 0 38px 24px;
	border-right: 2px solid #f4f4f4;
	border-bottom: 2px solid #f4f4f4;
	background: #fff;
	font-family: "Noto Sans", sans-serif;
}
.dashboard h1 {
	height: 76px;
	margin-right: 24px;
	padding-left: 5px;
	border: 2px solid #000;
	font-size: 49px;
	font-weight: 400;
	line-height: 72px;
}
.row {
	display: flex;
	gap: 16px;
	min-height: 0;
}
.row-top {
	flex: 494 1 0;
	margin: 0 68px 0 24px;
}
.row-scores {
	flex: 475 1 0;
	margin: 16px 64px 23px 26px;
}
.row-bottom {
	flex: 770 1 0;
	margin: 0 56px 0 20px;
}
.panel {
	display: flex;
	flex-direction: column;
	flex: 1;
	min-width: 0;
	border: 2px solid #000;
}
.panel h3 {
	padding: 10px 8px 24px;
	font-size: 25px;
	font-weight: 600;
	line-height: 32px;
	color: #000;
}
.panel h3.plain {
	font-size: 26px;
	font-weight: 400;
}
.donut {
	display: flex;
	justify-content: center;
	align-items: center;
	flex: 1;
	min-height: 0;
	margin: 0 2px 2px 0;
	overflow: hidden;
	border: 2px solid #ccc;
	border-width: 1px 2px 2px 0;
}
.donut text {
	font-size: 38px;
	font-weight: 600;
	text-anchor: middle;
	fill: #000;
}
.donut .big {
	font-size: 42px;
	font-weight: 700;
}

/* ----- FILTERS ----- */
.filters {
	flex: 0 0 408px;
	padding: 7px 14px 0 8px;
	font-size: 24px;
}
.filters h4 {
	font-size: 24px;
	font-weight: 600;
	line-height: 32px;
}
.range-values {
	display: flex;
	justify-content: space-between;
	padding: 13px 10px 0;
}
.range {
	position: relative;
	height: 22px;
	margin: 8px 3px 31px 9px;
}
.range::before {
	content: "";
	position: absolute;
	top: 7px;
	left: 10px;
	right: 10px;
	height: 8px;
	background: #b3b3b3;
}
.range input {
	appearance: none;
	position: absolute;
	left: 0;
	width: 100%;
	height: 22px;
	background: none;
	pointer-events: none;
}
.range input::-webkit-slider-thumb {
	appearance: none;
	width: 18px;
	height: 22px;
	border: 2px solid #666;
	border-radius: 11px 0 0 11px;
	background: #fff;
	pointer-events: auto;
}
.range .high::-webkit-slider-thumb {
	border-radius: 0 11px 11px 0;
}
.address-select {
	display: flex;
	height: 40px;
	margin: 9px 0 0 6px;
	border: 2px solid #c6c6c6;
	border-radius: 3px;
}
.address-select select {
	flex: 1;
	padding-left: 7px;
	font-size: 22px;
}
.address-select span {
	display: flex;
	align-items: center;
	padding: 0 9px;
	border-left: 2px solid #e6e6e6;
}
.address-select svg {
	width: 16px;
	height: 16px;
}

/* ----- MAP ----- */
.map-panel {
	flex: 1330 1 0;
}
.map {
	position: relative;
	flex: 1;
	min-height: 0;
	margin: 0 1px 1px 0;
	overflow: hidden;
}
.map > svg {
	width: 100%;
	height: 100%;
}
.map path {
	stroke-linejoin: round;
	vector-effect: non-scaling-stroke;
}
.border-halo {
	fill: none;
	stroke: #f1f1f1;
	stroke-width: 6;
}
.border-line {
	fill: none;
	stroke: #999;
	stroke-width: 2;
}
.river {
	fill: none;
	stroke: #f8f8f8;
	stroke-width: 3;
}
.halo {
	stroke: #f1f1f1;
	stroke-width: 14;
}
.place {
	font-size: 22px;
	text-anchor: middle;
	fill: #999;
	stroke: #f1f1f1;
	stroke-width: 4;
	paint-order: stroke;
}
.place.wi {
	font-size: 66px;
	text-anchor: start;
	stroke-width: 12;
}
.country {
	font-size: 32px;
	fill: #858585;
}
.credit {
	position: absolute;
	left: 6px;
	bottom: 6px;
	padding: 0 8px 0 6px;
	background: rgba(255, 255, 255, 0.7);
	font-family: "Liberation Sans", sans-serif;
	font-size: 16px;
	line-height: 24px;
}

/* ----- BAR CHART ----- */
.bar-panel {
	flex: 1492 1 0;
	border-right: 0;
}
.bars {
	display: flex;
	flex-direction: column;
	flex: 1;
	min-height: 0;
	color: #666;
	font-size: 24px;
}
.bars-head {
	display: flex;
	align-items: center;
	gap: 8px;
	width: 328px;
	height: 40px;
	padding-top: 5px;
	justify-content: flex-end;
	color: #333;
	font-weight: 600;
}
.bars-body {
	display: flex;
	flex: 1;
	min-height: 0;
	overflow: hidden;
}
.names {
	width: 368px;
	padding-right: 9px;
	border-right: 2px solid #f4f4f4;
	font-size: 25px;
	font-weight: 300;
}
.names li {
	height: 40px;
	line-height: 42px;
	text-align: right;
	white-space: nowrap;
}
.names li:last-child {
	height: 30px;
	line-height: 38px;
}
.plot {
	flex: 1;
	padding-left: 33px;
	border-bottom: 2px solid #f4f4f4;
	background: linear-gradient(#ccc 60%, transparent 0) 33px 0 / 2px 10px repeat-y;
}
.plot li {
	height: 40px;
	padding-top: 6px;
}
.bar {
	display: block;
	height: 30px;
}
.c1 {
	background: #b6daf1;
}
.c2 {
	background: #a1cce7;
}
.c3 {
	background: #9ac4e4;
}
.bar-track {
	width: 33px;
	padding: 6px 5px 0 10px;
	border: 2px solid #e6e6e6;
	border-width: 0 2px;
	background: #fafafa;
}
.bar-track div {
	width: 16px;
	height: 36px;
	border-radius: 8px;
	background: #7f7f7f;
}
.axis {
	display: flex;
	padding: 0 70px 0 334px;
}
.axis span {
	flex: 1;
	padding-top: 14px;
	text-align: center;
	background: linear-gradient(#e6e6e6, #e6e6e6) center top / 2px 9px no-repeat;
}
.axis-title {
	display: flex;
	align-items: center;
	margin: 17px 33px 15px 368px;
	color: #333;
}
.axis-title b {
	font-weight: 600;
}
.axis-title span {
	display: flex;
	align-items: center;
	flex: 1;
	gap: 14px;
	padding-left: 10px;
}

/* ----- SELECTED CONTAINER ----- */
.selection {
	position: absolute;
	top: 104px;
	left: 12px;
	right: 12px;
	bottom: 12px;
	border: 4px solid rgba(67, 104, 140, 0.92);
	border-radius: 3px;
	pointer-events: none;
}
.grip {
	position: absolute;
	top: -26px;
	left: 50%;
	width: 100px;
	height: 22px;
	margin-left: -50px;
	padding: 4px 9px;
	border-radius: 4px 4px 0 0;
	background: rgba(67, 104, 140, 0.92);
}
.grip::before {
	content: "";
	display: block;
	height: 10px;
	border: 2px solid #fff;
	border-width: 2px 0;
}
.handle {
	position: absolute;
	top: -4px;
	left: -4px;
	display: flex;
	flex-direction: column;
	align-items: center;
	gap: 16px;
	width: 40px;
	padding: 10px 0 14px;
	background: rgba(67, 104, 140, 0.92);
}
.handle svg {
	fill: none;
	stroke: #fff;
	stroke-width: 2;
}
.handle .solid {
	fill: #fff;
	stroke: none;
}

/* ----- SHEET TABS ----- */
.tabs {
	display: grid;
	grid-template-columns: 262fr 294fr 178fr 346fr 296fr 62fr 126fr 208fr 196fr 288fr 214fr 252fr 76fr 186fr 176fr 7fr 63fr 64fr 66fr;
	height: 62px;
	flex-shrink: 0;
	border-top: 2px solid #c6c6c6;
	border-bottom: 2px solid #d0d0d0;
	background: #e6e6e6;
	color: #555;
}
.tabs > * {
	display: flex;
	align-items: center;
	gap: 8px;
	min-width: 0;
	padding: 8px 0 0 12px;
	border-right: 2px solid #c9c9c9;
	border-bottom: 8px solid transparent;
	color: #555;
	text-decoration: none;
	white-space: nowrap;
}
.tabs .source {
	padding-left: 18px;
	gap: 10px;
}
.tabs > a:has(use) {
	padding-left: 16px;
}
.tabs svg {
	fill: none;
	stroke: #666;
	stroke-width: 2;
}
.tabs .plus {
	stroke-width: 4;
}
.tabs .current {
	border-bottom-color: #4e79a0;
	background: #fafafa;
	font-weight: 600;
}
.tabs .green {
	border-bottom-color: #17917c;
}
.tabs .red {
	border-bottom-color: #f96075;
}
.tabs button {
	padding-left: 18px;
}
.tabs span {
	padding: 0;
}

/* ----- STATUS BAR ----- */
.status {
	display: flex;
	justify-content: flex-end;
	height: 40px;
	flex-shrink: 0;
	background: #ebebeb;
}
.cell, .pager, .views {
	border-left: 2px solid #c9c9c9;
}
.w1 {
	width: 254px;
}
.w2 {
	width: 54px;
}
.w3 {
	width: 94px;
}
.pager {
	display: flex;
	align-items: center;
	justify-content: space-between;
	width: 142px;
	padding: 0 14px;
}
.pager svg {
	width: 16px;
	height: 16px;
	fill: #666;
}
.views {
	display: flex;
	align-items: center;
	gap: 18px;
	width: 153px;
	padding-left: 16px;
}
.views svg {
	width: 24px;
	height: 24px;
}
```
